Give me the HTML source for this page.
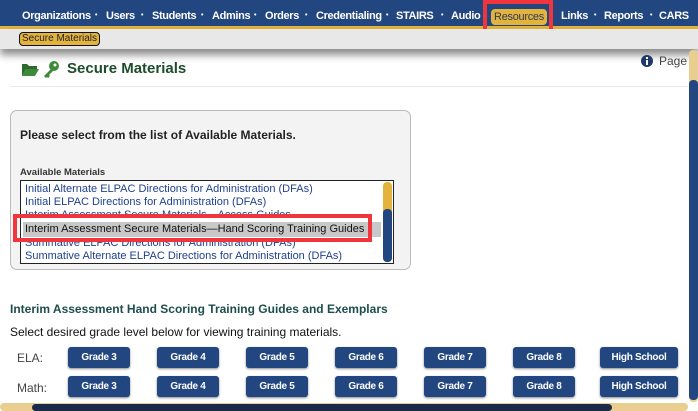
<!DOCTYPE html>
<html><head><style>
*{margin:0;padding:0;box-sizing:border-box}
body{width:698px;height:411px;overflow:hidden;background:#fff;font-family:"Liberation Sans",sans-serif;position:relative}
.nav{position:absolute;left:0;top:0;width:698px;height:29px;background:#22467f;border-bottom:3px solid #e3b33b}
.nav span{position:absolute;top:10px;color:#fff;font-size:11px;font-weight:bold;letter-spacing:-0.35px}
.nav .dot{font-size:7px;top:12px;letter-spacing:0}
.sub{position:absolute;left:0;top:29px;width:698px;height:20px;background:#e8e8e8;box-shadow:0 6px 8px rgba(0,0,0,.45)}
.pill{position:absolute;left:19px;top:3px;height:14px;padding:0 2px;border:1px solid #111;border-radius:4px;background:#e3b33b;font-size:10px;line-height:12px;color:#223}
.res{position:absolute;left:491px;top:9px;width:56px;height:16px;background:#e3b33b;border-radius:4px;color:#2b3b5c;font-size:11px;line-height:16px;text-align:center;letter-spacing:-0.3px}
.redbox{position:absolute;border:4px solid #f0353d}
.title{position:absolute;left:67px;top:60px;font-size:15px;font-weight:bold;color:#1e4d2b}
.hr{position:absolute;left:10px;top:86px;width:678px;border-top:1px solid #e8e8e8}
.box{position:absolute;left:10px;top:110px;width:401px;height:160px;background:#f3f3f3;border:1px solid #bbb;border-radius:7px}
.list{position:absolute;left:20px;top:180px;width:374px;height:84px;background:#fff;border:1px solid #222;overflow:hidden}
.list div{position:absolute;left:4px;font-size:11px;color:#1f3f8f;white-space:nowrap}
.btn{position:absolute;width:62px;height:21px;background:#22467f;border-radius:3px;color:#fff;font-size:10px;font-weight:bold;text-align:center;line-height:21px;box-shadow:0 1px 2px #888;letter-spacing:-0.3px}
</style></head><body>
<div class="nav">
<span style="left:22px">Organizations</span><span class="dot" style="left:95px">•</span>
<span style="left:106px">Users</span><span class="dot" style="left:141px">•</span>
<span style="left:152px">Students</span><span class="dot" style="left:201px">•</span>
<span style="left:212px">Admins</span><span class="dot" style="left:254px">•</span>
<span style="left:265px">Orders</span><span class="dot" style="left:305px">•</span>
<span style="left:316px">Credentialing</span><span class="dot" style="left:386px">•</span>
<span style="left:396px">STAIRS</span><span class="dot" style="left:441px">•</span>
<span style="left:451px">Audio</span>
<span style="left:561px">Links</span><span class="dot" style="left:594px">•</span>
<span style="left:604px">Reports</span><span class="dot" style="left:650px">•</span>
<span style="left:659px">CARS</span>
</div>
<div class="res">Resources</div>
<div class="redbox" style="left:483px;top:0;width:70px;height:34px"></div>
<div class="sub"><div class="pill">Secure Materials</div></div>
<svg style="position:absolute;left:21px;top:60px" width="40" height="18"><path d="M1 4h5l2 2h8v3H5L1 16z" fill="#2d6a2d"/><path d="M5 9h13l-4 7H1z" fill="#3f8a3a"/><circle cx="33" cy="6" r="5" fill="#3f8a3a"/><circle cx="34" cy="5" r="1.5" fill="#fff"/><path d="M30 9l-7 7 2 2 1-1 1 1 2-2-1-1 4-4z" fill="#3f8a3a"/></svg>
<div class="title">Secure Materials</div>
<svg style="position:absolute;left:641px;top:55px" width="12" height="12"><circle cx="6" cy="6" r="6" fill="#1e3a66"/><rect x="5" y="5" width="2" height="5" fill="#fff"/><rect x="5" y="2" width="2" height="2" fill="#fff"/></svg>
<div style="position:absolute;left:659px;top:54px;font-size:12px;color:#444">Page</div>
<div class="hr"></div>
<div class="box"></div>
<div style="position:absolute;left:20px;top:128px;font-size:12px;font-weight:bold;color:#222">Please select from the list of Available Materials.</div>
<div style="position:absolute;left:20px;top:167px;font-size:9.5px;font-weight:bold;color:#333">Available Materials</div>
<div class="list">
<div style="top:2px">Initial Alternate ELPAC Directions for Administration (DFAs)</div>
<div style="top:15px">Initial ELPAC Directions for Administration (DFAs)</div>
<div style="top:28px">Interim Assessment Secure Materials—Access Guides</div>
<div style="top:41px;left:2px;width:358px;height:15px;background:#c8c8c8"></div>
<div style="top:42px;color:#111">Interim Assessment Secure Materials—Hand Scoring Training Guides</div>
<div style="top:56px">Summative ELPAC Directions for Administration (DFAs)</div>
<div style="top:69px">Summative Alternate ELPAC Directions for Administration (DFAs)</div>
<div style="left:362px;top:1px;width:9px;height:80px;background:#e3b33b;border-radius:4px"></div>
<div style="left:362px;top:28px;width:9px;height:53px;background:#22467f;border-radius:4px"></div>
</div>
<div class="redbox" style="left:13px;top:214px;width:359px;height:28px"></div>
<div style="position:absolute;left:10px;top:302px;font-size:12px;font-weight:bold;color:#1e4d4d">Interim Assessment Hand Scoring Training Guides and Exemplars</div>
<div style="position:absolute;left:10px;top:325px;font-size:12px;color:#111">Select desired grade level below for viewing training materials.</div>
<div style="position:absolute;left:17px;top:351px;font-size:12px;color:#444">ELA:</div>
<div style="position:absolute;left:17px;top:381px;font-size:12px;color:#444">Math:</div>
<div class="btn" style="left:68px;top:347px">Grade 3</div><div class="btn" style="left:157px;top:347px">Grade 4</div><div class="btn" style="left:246px;top:347px">Grade 5</div><div class="btn" style="left:335px;top:347px">Grade 6</div><div class="btn" style="left:424px;top:347px">Grade 7</div><div class="btn" style="left:513px;top:347px">Grade 8</div><div class="btn" style="left:600px;top:347px;width:78px">High School</div>
<div class="btn" style="left:68px;top:376px">Grade 3</div><div class="btn" style="left:157px;top:376px">Grade 4</div><div class="btn" style="left:246px;top:376px">Grade 5</div><div class="btn" style="left:335px;top:376px">Grade 6</div><div class="btn" style="left:424px;top:376px">Grade 7</div><div class="btn" style="left:513px;top:376px">Grade 8</div><div class="btn" style="left:600px;top:376px;width:78px">High School</div>
<div style="position:absolute;left:689px;top:50px;width:9px;height:352px;background:#e8cf8f;border-radius:4px"></div>
<div style="position:absolute;left:689px;top:80px;width:9px;height:320px;background:#22467f;border-radius:4px"></div>
<div style="position:absolute;left:0;top:403px;width:688px;height:8px;background:#e8cf8f;border-radius:4px"></div>
<div style="position:absolute;left:32px;top:404px;width:580px;height:7px;background:#1a2b4a;border-radius:4px"></div>
</body></html>
